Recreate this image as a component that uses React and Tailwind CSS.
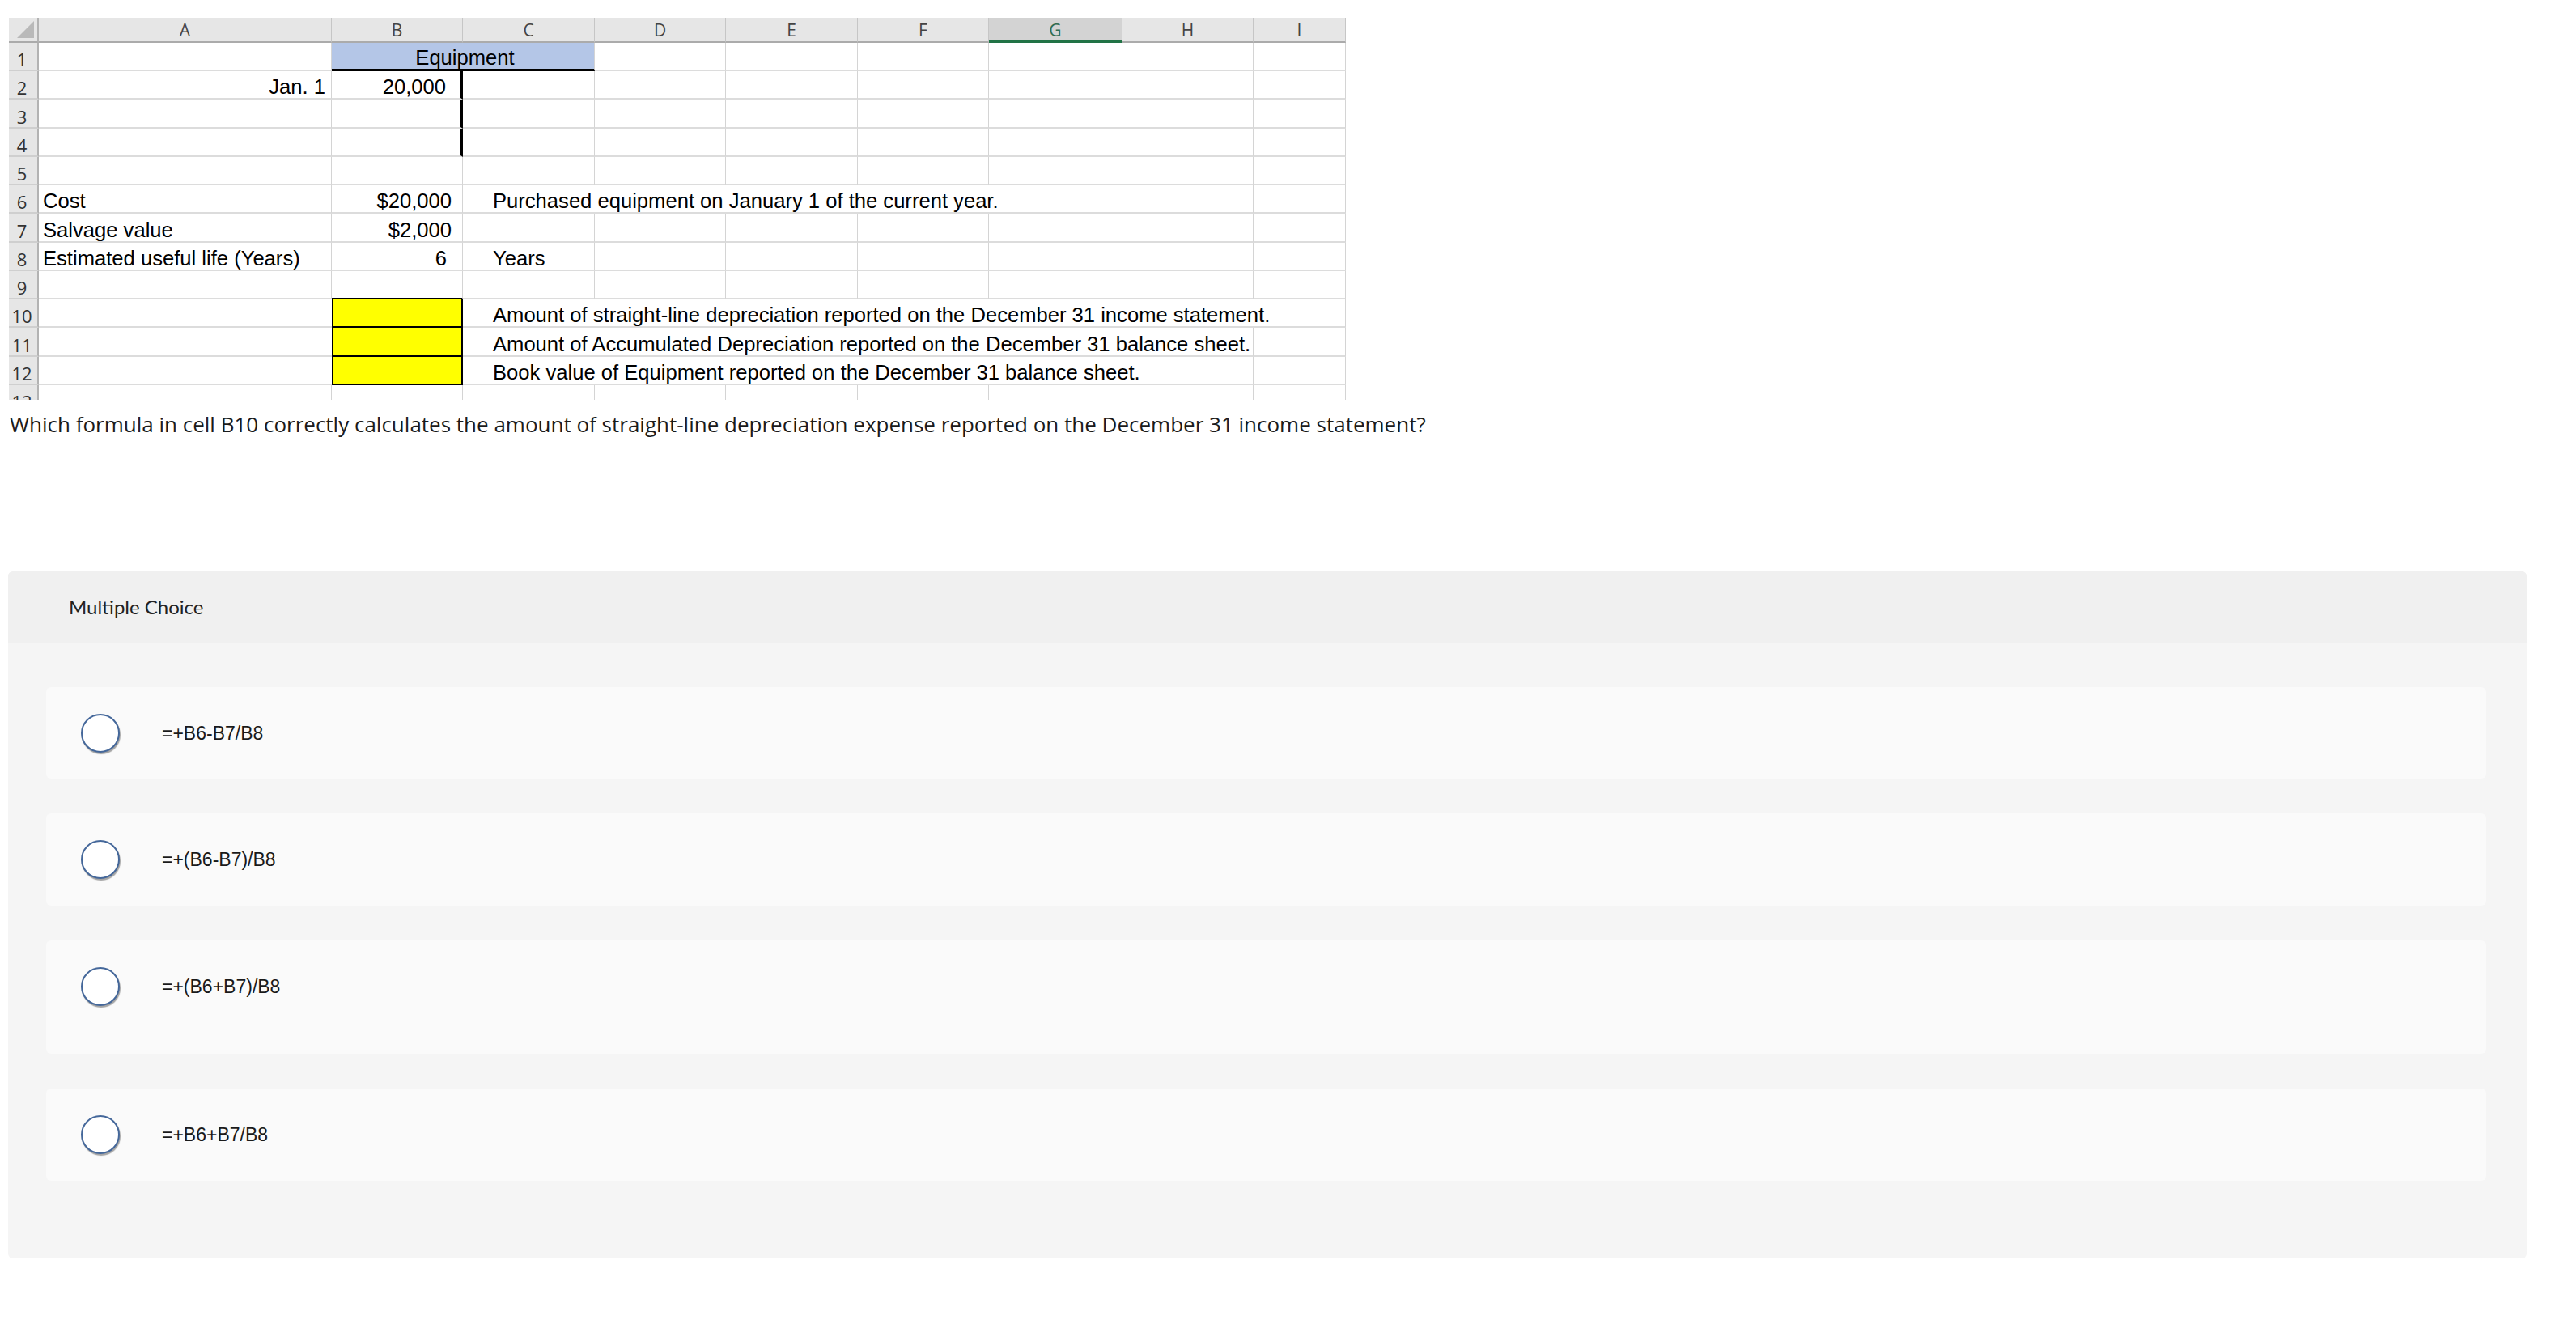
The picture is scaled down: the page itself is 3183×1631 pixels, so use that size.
const COLS = 'grid grid-cols-[37px_362px_162px_163px_162px_163px_162px_165px_162px_114px]';
const LETTERS = ['A', 'B', 'C', 'D', 'E', 'F', 'G', 'H', 'I'];
const ROW_H = ['h-[35px]', 'h-[35px]', 'h-[36px]', 'h-[35px]', 'h-[35px]', 'h-[35px]', 'h-[36px]', 'h-[35px]', 'h-[35px]', 'h-[35px]', 'h-[36px]', 'h-[35px]', 'h-[35px]'];

const empty = (n) => Array.from({ length: n }, () => ({}));
const yellow = 'bg-[#ffff00] border-l-2 border-l-black border-r-2 border-r-black border-b-black';
const tLine = 'border-r-[3px] border-r-black';

const ROWS = [
  [{}, { span: 'col-span-2', text: 'Equipment', cls: 'justify-center bg-[#b4c6e7] border-b-[3px] border-b-black' }, ...empty(6)],
  [{ text: 'Jan. 1', cls: 'justify-end pr-[7px]' }, { text: '20,000', cls: `justify-end pr-[18px] ${tLine}` }, ...empty(7)],
  [{}, { cls: tLine }, ...empty(7)],
  [{}, { cls: tLine }, ...empty(7)],
  empty(9),
  [{ text: 'Cost' }, { text: '$20,000', cls: 'justify-end pr-[13px]' }, { span: 'col-span-5', text: 'Purchased equipment on January 1 of the current year.', cls: 'pl-[37px]' }, ...empty(2)],
  [{ text: 'Salvage value' }, { text: '$2,000', cls: 'justify-end pr-[13px]' }, ...empty(7)],
  [{ text: 'Estimated useful life (Years)' }, { text: '6', cls: 'justify-end pr-[19px]' }, { text: 'Years', cls: 'pl-[37px]' }, ...empty(6)],
  [{}, { cls: 'border-b-black' }, ...empty(7)],
  [{ cls: 'border-r-0' }, { cls: yellow }, { span: 'col-span-7', text: 'Amount of straight-line depreciation reported on the December 31 income statement.', cls: 'pl-[37px]' }],
  [{ cls: 'border-r-0' }, { cls: yellow }, { span: 'col-span-6', text: 'Amount of Accumulated Depreciation reported on the December 31 balance sheet.', cls: 'pl-[37px]' }, {}],
  [{ cls: 'border-r-0' }, { cls: yellow }, { span: 'col-span-6', text: 'Book value of Equipment reported on the December 31 balance sheet.', cls: 'pl-[37px]' }, {}],
  empty(9),
];

const OPTIONS = [
  { label: '=+B6-B7/B8', h: 'h-[113px]' },
  { label: '=+(B6-B7)/B8', h: 'h-[114px]' },
  { label: '=+(B6+B7)/B8', h: 'h-[140px]' },
  { label: '=+B6+B7/B8', h: 'h-[114px]' },
];

function Sheet() {
  return (
    <div className="ml-[11px] mt-[22px] w-[1652px] h-[472px] overflow-hidden bg-white">
      <div className={`${COLS} h-[31px]`}>
        <div className="bg-[#e6e6e6] border-r-2 border-r-[#b3b3b3] border-b-2 border-b-[#ababab] flex items-end justify-end pr-[4px] pb-[4px]">
          <svg width="21" height="21" viewBox="0 0 21 21"><polygon points="21,0 21,21 0,21" fill="#b9b9b9" /></svg>
        </div>
        {LETTERS.map((l) => (
          <div
            key={l}
            className={`flex items-center justify-center pt-[2px] border-r border-r-[#c6c6c6] text-[21px] font-['Open_Sans',sans-serif] leading-none ${
              l === 'G' ? 'bg-[#d3d3d3] text-[#2f6b50] border-b-[3px] border-b-[#217346]' : 'bg-[#e6e6e6] text-[#444] border-b-2 border-b-[#ababab]'
            }`}
          >
            {l}
          </div>
        ))}
      </div>
      {ROWS.map((cells, i) => (
        <div key={i} className={`${COLS} ${ROW_H[i]}`}>
          <div className="bg-[#e6e6e6] border-r-2 border-r-[#b3b3b3] border-b-2 border-b-[#cfcfcf] flex items-end justify-center pb-[2px] pr-[3px] text-[22px] text-[#333] font-['Open_Sans',sans-serif] leading-none">
            {i + 1}
          </div>
          {cells.map((c, j) => (
            <div
              key={j}
              className={`${c.span || ''} flex items-end pb-0 pl-[5px] whitespace-nowrap border-r border-r-[#d4d4d4] border-b-2 border-b-[#dcdcdc] font-['Liberation_Sans',Arial,sans-serif] text-[25.6px] leading-none text-black ${c.cls || ''}`}
            >
              {c.text}
            </div>
          ))}
        </div>
      ))}
    </div>
  );
}

export default function App() {
  return (
    <div className="w-full min-h-screen bg-white pb-[76px]">
      <Sheet />
      <p className="pl-[12px] mt-[12px] h-[36px] leading-[36px] text-[26px] text-[#1b1b1b] font-['Open_Sans',sans-serif] whitespace-nowrap">
        Which formula in cell B10 correctly calculates the amount of straight-line depreciation expense reported on the December 31 income statement?
      </p>
      <div className="ml-[10px] mt-[164px] w-[3112px] rounded-[6px] bg-[#f5f5f5] overflow-hidden pb-[96px]">
        <div className="h-[88px] bg-[#f0f0f0] flex items-center pl-[75px] text-[24px] text-[#222] font-['Lato',sans-serif]">
          Multiple Choice
        </div>
        <div className="pt-[55px] ml-[47px] w-[3015px] flex flex-col gap-[43px]">
          {OPTIONS.map((o) => (
            <div key={o.label} className={`${o.h} rounded-[6px] bg-[#fafafa] flex items-start pl-[43px] pt-[33px]`}>
              <span className="w-[48px] h-[48px] rounded-full border-2 border-[#44679a] bg-white shadow-[1px_2px_1px_rgba(0,0,0,0.35)]" />
              <span className="ml-[52px] h-[48px] flex items-center text-[23px] text-[#1a1a1a] font-['Liberation_Sans',Arial,sans-serif]">
                {o.label}
              </span>
            </div>
          ))}
        </div>
      </div>
    </div>
  );
}
